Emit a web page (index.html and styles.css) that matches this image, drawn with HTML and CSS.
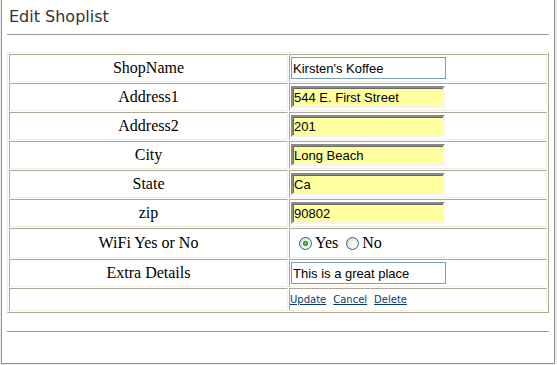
FILE: index.html
```html
<!DOCTYPE html>
<html>
<head>
<meta charset="utf-8">
<title>Edit Shoplist</title>
<link rel="stylesheet" href="styles.css">
</head>
<body>
<div class="panel">
  <div class="inner">
    <h1 class="title">Edit Shoplist</h1>
    <div class="rule"></div>
    <table class="form">
      <tr class="row">
        <td class="label">ShopName</td>
        <td class="field"><input class="text plain" type="text" value="Kirsten's Koffee"></td>
      </tr>
      <tr class="row">
        <td class="label">Address1</td>
        <td class="field"><input class="text yellow" type="text" value="544 E. First Street"></td>
      </tr>
      <tr class="row">
        <td class="label">Address2</td>
        <td class="field"><input class="text yellow" type="text" value="201"></td>
      </tr>
      <tr class="row">
        <td class="label">City</td>
        <td class="field"><input class="text yellow" type="text" value="Long Beach"></td>
      </tr>
      <tr class="row">
        <td class="label">State</td>
        <td class="field"><input class="text yellow" type="text" value="Ca"></td>
      </tr>
      <tr class="row">
        <td class="label">zip</td>
        <td class="field"><input class="text yellow" type="text" value="90802"></td>
      </tr>
      <tr class="row-radio">
        <td class="label">WiFi Yes or No</td>
        <td class="field">
          <div class="radios">
            <label class="opt"><input class="radio" type="radio" name="wifi" checked>Yes</label>
            <label class="opt"><input class="radio" type="radio" name="wifi">No</label>
          </div>
        </td>
      </tr>
      <tr class="row">
        <td class="label">Extra Details</td>
        <td class="field"><input class="text plain" type="text" value="This is a great place"></td>
      </tr>
      <tr class="row-links">
        <td class="label"></td>
        <td class="field links-cell">
          <div class="links">
            <a href="#" class="link">Update</a>
            <a href="#" class="link">Cancel</a>
            <a href="#" class="link">Delete</a>
          </div>
        </td>
      </tr>
    </table>
    <div class="rule bottom-rule"></div>
  </div>
</div>
</body>
</html>
```

FILE: styles.css
```css
html, body {
  margin: 0;
  padding: 0;
  background: #efefef;
}

.panel {
  margin-left: 1px;
  width: 552px;
  height: 363px;
  background: #ffffff;
  border-left: 1px solid #8e8e8e;
  border-right: 1px solid #8e8e8e;
  border-bottom: 1px solid #8e8e8e;
}

.inner {
  padding: 0 5px;
  display: flex;
  flex-direction: column;
}

.title {
  margin: 0;
  padding: 7px 0 0 2px;
  height: 28px;
  box-sizing: border-box;
  font-family: "DejaVu Sans", sans-serif;
  font-weight: normal;
  font-size: 16px;
  line-height: 20px;
  color: #333333;
}

.rule {
  height: 0;
  border-top: 1px solid #9a9a9a;
  margin-top: 6px;
}

.form {
  margin-top: 17px;
  width: 542px;
  border-collapse: separate;
  border-spacing: 1px;
  border: 1px solid;
  border-color: #f1efe2 #aca899 #aca899 #f1efe2;
  table-layout: fixed;
}

.form td {
  border: 1px solid;
  border-color: #aca899 #f1efe2 #f1efe2 #aca899;
  padding: 2px 1px;
  vertical-align: middle;
}

.label {
  width: 275px;
  text-align: center;
  font-family: "Liberation Serif", serif;
  font-size: 16px;
  color: #000;
}

.row td {
  height: 22px;
}

.row-radio td {
  height: 24px;
}

.row-links td {
  height: 21px;
  padding: 0;
}

.text {
  display: block;
  box-sizing: border-box;
  width: 155px;
  height: 22px;
  margin: 0;
  font-family: "Liberation Sans", sans-serif;
  font-size: 13px;
  color: #000;
  outline: none;
}

.plain {
  border: 1px solid #7f9db9;
  background: #ffffff;
  padding: 0 1px;
}

.yellow {
  border: 2px solid;
  border-color: #8a8a8a #f4f4f0 #f4f4f0 #8a8a8a;
  box-shadow: inset 1px 1px 0 #6a6a6a;
  background: #ffffa0;
  padding: 0 0 0 1px;
  width: 154px;
}

.radios {
  display: flex;
  align-items: center;
  font-family: "Liberation Serif", serif;
  font-size: 16px;
  color: #000;
}

.opt {
  display: flex;
  align-items: center;
}

.radio {
  -webkit-appearance: none;
  appearance: none;
  box-sizing: border-box;
  width: 13px;
  height: 13px;
  margin: 0 3px 0 8px;
  border-radius: 50%;
  border: 1px solid #2f5f92;
  background: radial-gradient(circle at 65% 65%, #ffffff 0, #eeeeea 45%, #cfcfc6 100%);
}

.radio:checked {
  background:
    radial-gradient(circle at 50% 50%, #5fd35f 0, #21a121 2.2px, rgba(33,161,33,0) 3px),
    radial-gradient(circle at 65% 65%, #ffffff 0, #eeeeea 45%, #cfcfc6 100%);
}

.opt + .opt .radio {
  margin-left: 8px;
}

.links {
  display: flex;
  gap: 7px;
}

.link {
  font-family: "DejaVu Sans", sans-serif;
  font-size: 10px;
  color: #0b3a6e;
  text-decoration: underline;
}

.bottom-rule {
  margin-top: 18px;
}
```
